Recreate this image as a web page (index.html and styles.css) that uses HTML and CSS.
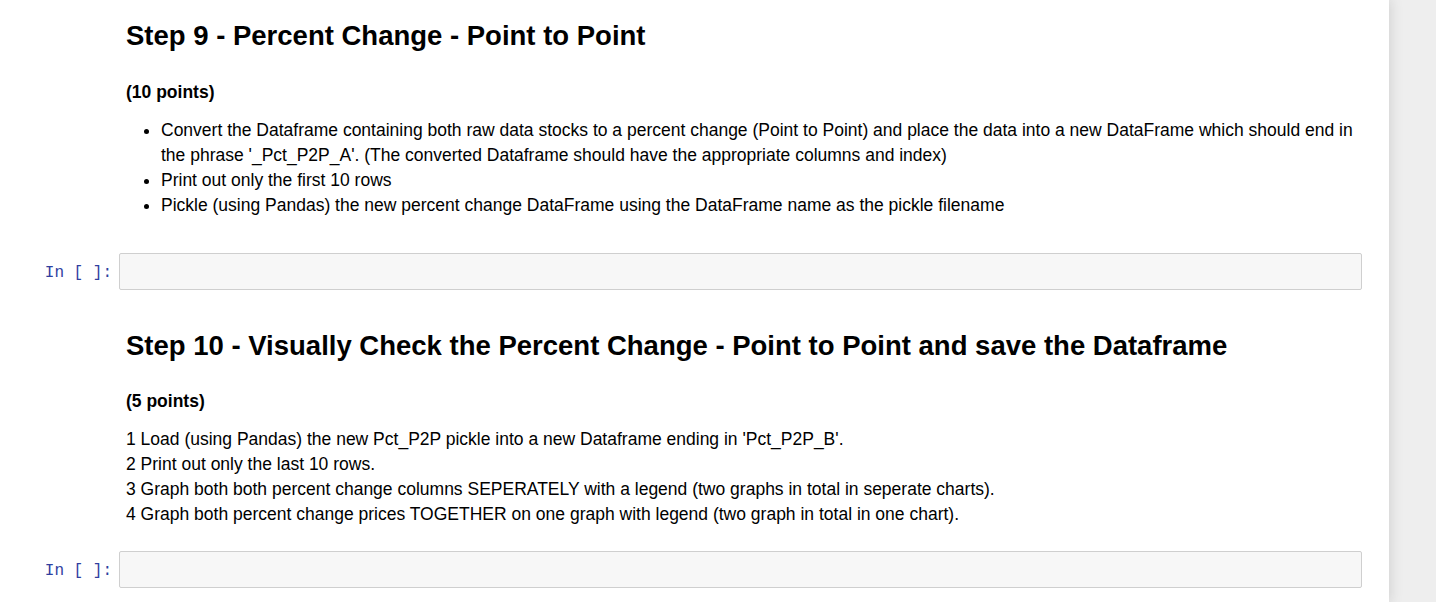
FILE: index.html
```html
<!DOCTYPE html>
<html>
<head>
<meta charset="utf-8">
<link rel="stylesheet" href="styles.css">
</head>
<body>
<div class="notebook">
  <div class="cell text-cell first">
    <div class="prompt"></div>
    <div class="content">
      <h2 class="title">Step 9 - Percent Change - Point to Point</h2>
      <h4 class="points">(10 points)</h4>
      <ul class="list">
        <li>Convert the Dataframe containing both raw data stocks to a percent change (Point to Point) and place the data into a new DataFrame which should end in the phrase '_Pct_P2P_A'. (The converted Dataframe should have the appropriate columns and index)</li>
        <li>Print out only the first 10 rows</li>
        <li>Pickle (using Pandas) the new percent change DataFrame using the DataFrame name as the pickle filename</li>
      </ul>
    </div>
  </div>
  <div class="cell code-cell code-a">
    <div class="prompt in">In&nbsp;[&nbsp;]:</div>
    <div class="input-area"></div>
  </div>
  <div class="cell text-cell second">
    <div class="prompt"></div>
    <div class="content">
      <h2 class="title">Step 10 - Visually Check the Percent Change - Point to Point and save the Dataframe</h2>
      <h4 class="points">(5 points)</h4>
      <p class="para">1 Load (using Pandas) the new Pct_P2P pickle into a new Dataframe ending in 'Pct_P2P_B'.<br>2 Print out only the last 10 rows.<br>3 Graph both both percent change columns SEPERATELY with a legend (two graphs in total in seperate charts).<br>4 Graph both percent change prices TOGETHER on one graph with legend (two graph in total in one chart).</p>
    </div>
  </div>
  <div class="cell code-cell code-b">
    <div class="prompt in">In&nbsp;[&nbsp;]:</div>
    <div class="input-area"></div>
  </div>
</div>
</body>
</html>
```
FILE: styles.css
```css
html, body {
  margin: 0;
  padding: 0;
}
body {
  background: #eeeeee;
  font-family: "Liberation Sans", Arial, sans-serif;
  font-size: 17.5px;
  color: #000;
  overflow: hidden;
  height: 602px;
}
.notebook {
  width: 1389px;
  min-height: 602px;
  background: #fff;
  box-shadow: 0 0 12px 1px rgba(87, 87, 87, 0.2);
  padding-right: 27px;
  box-sizing: border-box;
}
.cell {
  display: flex;
  flex-direction: row;
}
.prompt {
  width: 119px;
  flex: none;
  box-sizing: border-box;
  padding-right: 7px;
  text-align: right;
}
.prompt.in {
  font-family: "Liberation Mono", Consolas, monospace;
  font-size: 16px;
  color: #303f9f;
  line-height: 37px;
  padding-top: 2px;
}
.content {
  flex: 1;
  padding-left: 7px;
  padding-right: 7px;
}
.first {
  padding-top: 19px;
}
.title {
  margin: 0;
  font-size: 27.5px;
  font-weight: bold;
  line-height: 34px;
}
.points {
  margin: 26.5px 0 0 0;
  font-size: 17.5px;
  font-weight: bold;
  line-height: 25px;
}
.list {
  margin: 13px 0 0 0;
  padding-left: 35px;
  line-height: 25px;
}
.para {
  margin: 13px 0 0 0;
  line-height: 25px;
}
.code-a {
  margin-top: 35.5px;
}
.second {
  margin-top: 36.5px;
}
.code-b {
  margin-top: 23.5px;
}
.input-area {
  flex: 1;
  height: 37px;
  box-sizing: border-box;
  border: 1px solid #cfcfcf;
  border-radius: 2px;
  background: #f7f7f7;
}
```
